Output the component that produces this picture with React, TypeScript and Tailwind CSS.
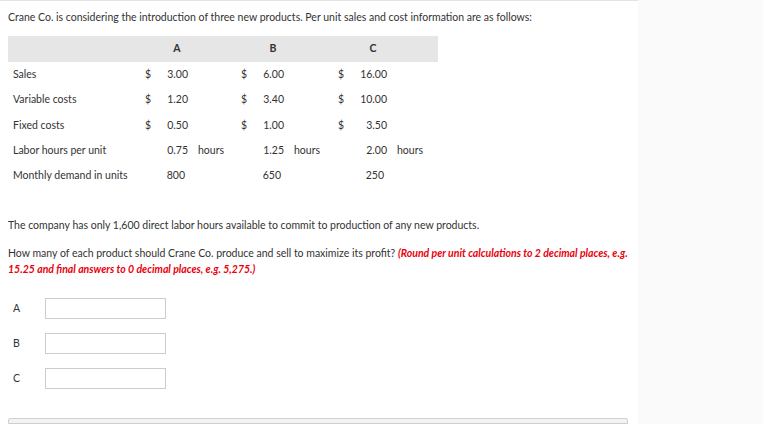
const rows = [
  { label: "Sales", a: "3.00", b: "6.00", c: "16.00", money: true },
  { label: "Variable costs", a: "1.20", b: "3.40", c: "10.00", money: true },
  { label: "Fixed costs", a: "0.50", b: "1.00", c: "3.50", money: true },
  { label: "Labor hours per unit", a: "0.75", b: "1.25", c: "2.00", money: false },
  { label: "Monthly demand in units", a: "800", b: "650", c: "250", money: false, demand: true },
];

function Cells({ value, money, hours, demand, dollarW, valueW, unitW }: {
  value: string;
  money: boolean;
  hours: boolean;
  demand?: boolean;
  dollarW: string;
  valueW: string;
  unitW: string;
}) {
  return (
    <>
      <div className={`${dollarW} shrink-0`}>{money ? "$" : ""}</div>
      <div className={`${valueW} shrink-0 text-right ${demand ? "pr-[3px]" : ""}`}>{value}</div>
      <div className={`${unitW} shrink-0 pl-[10px]`}>{hours ? "hours" : ""}</div>
    </>
  );
}

export default function App() {
  return (
    <div className="flex h-[424px] w-[764px] overflow-hidden bg-white font-['Lato',sans-serif] text-[10.5px] text-[#333]">
      <div className="flex w-[638px] shrink-0 flex-col border-t border-[#e3e3e3] px-2">
        <p className="pt-[9px] leading-[14px]">
          Crane Co. is considering the introduction of three new products. Per unit sales and cost information are as follows:
        </p>

        <div className="mt-[12px] w-[430px]">
          <div className="flex h-[26px] items-center bg-[#e6e6e6] font-bold">
            <div className="w-[119px] shrink-0" />
            <div className="w-[100px] shrink-0 text-center">A</div>
            <div className="w-[92px] shrink-0 text-center">B</div>
            <div className="w-[108px] shrink-0 text-center">C</div>
          </div>
          {rows.map((r) => (
            <div key={r.label} className="flex h-[25.4px] items-center">
              <div className="w-[137px] shrink-0 pl-[5px]">{r.label}</div>
              <Cells value={r.a} money={r.money} hours={!r.money && !r.demand} demand={r.demand} dollarW="w-[15px]" valueW="w-[28px]" unitW="w-[53px]" />
              <Cells value={r.b} money={r.money} hours={!r.money && !r.demand} demand={r.demand} dollarW="w-[15px]" valueW="w-[28px]" unitW="w-[54px]" />
              <Cells value={r.c} money={r.money} hours={!r.money && !r.demand} demand={r.demand} dollarW="w-[14px]" valueW="w-[35px]" unitW="w-[51px]" />
            </div>
          ))}
        </div>

        <p className="mt-[28px] leading-[16px]">
          The company has only 1,600 direct labor hours available to commit to production of any new products.
        </p>
        <p className="mt-[12px] leading-[16px]">
          How many of each product should Crane Co. produce and sell to maximize its profit?{" "}
          <span className="font-bold italic text-[#e8000b]">
            (Round per unit calculations to 2 decimal places, e.g. 15.25 and final answers to 0 decimal places, e.g. 5,275.)
          </span>
        </p>

        <div className="mt-[21px] flex flex-col gap-[14px]">
          {["A", "B", "C"].map((l) => (
            <div key={l} className="flex h-[21px] items-center">
              <span className="w-[37px] shrink-0 pl-[5px]">{l}</span>
              <input type="text" className="h-[21px] w-[121px] border border-[#cccccc] bg-white outline-none" />
            </div>
          ))}
        </div>

        <div className="mt-[29px] h-[30px] w-[620px] rounded-t-[2px] border border-[#cfcfcf] bg-[#f3f3f3]" />
      </div>
      <div className="w-[125px] shrink-0 bg-[#fafafa]" />
    </div>
  );
}
